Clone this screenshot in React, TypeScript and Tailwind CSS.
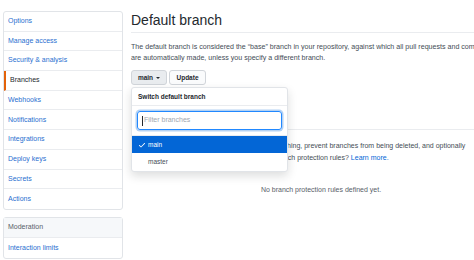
import React from 'react';

// Settings sidebar entries (repo settings page)
const navItems = [
  'Options',
  'Manage access',
  'Security & analysis',
  'Branches',
  'Webhooks',
  'Notifications',
  'Integrations',
  'Deploy keys',
  'Secrets',
  'Actions',
];

const Sidebar: React.FC = () => {
  return (
    <div className="w-[120px] shrink-0 ml-[3px] mt-[11px]">
      <div className="border border-[#e1e4e8] rounded-[3px] bg-white">
        {navItems.map((item, i) => {
          const active = item === 'Branches';
          return (
            <div
              key={item}
              className={
                'h-[19.7px] flex items-center pl-[4px] text-[7px] ' +
                (i < navItems.length - 1 ? 'border-b border-[#eaecef] ' : '') +
                (active
                  ? 'text-[#24292e] border-l-2 border-l-[#e36209] pl-[3px]'
                  : 'text-[#2a6fd0]')
              }
            >
              {item}
            </div>
          );
        })}
      </div>

      <div className="mt-[7px] border border-[#e1e4e8] rounded-[3px] bg-white">
        <div className="h-[20px] flex items-center pl-[4px] text-[7px] text-[#586069] bg-[#f6f8fa] border-b border-[#eaecef]">
          Moderation
        </div>
        <div className="h-[20px] flex items-center pl-[4px] text-[7px] text-[#2a6fd0]">
          Interaction limits
        </div>
      </div>
    </div>
  );
};

const CheckIcon: React.FC = () => (
  <svg width="8" height="8" viewBox="0 0 16 16" fill="white">
    <path d="M13.78 4.22a.75.75 0 010 1.06l-7.25 7.25a.75.75 0 01-1.06 0L2.22 9.28a.75.75 0 011.06-1.06L6 10.94l6.72-6.72a.75.75 0 011.06 0z" />
  </svg>
);

const BranchDropdown: React.FC = () => {
  return (
    <div className="absolute left-0 top-[17px] w-[157px] bg-white border border-[#e1e4e8] rounded-[3px] shadow-[0_4px_10px_rgba(27,31,35,0.15)] z-10">
      <div className="h-[18px] flex items-center pl-[6px] text-[6.5px] font-semibold text-[#24292e] border-b border-[#eaecef]">
        Switch default branch
      </div>
      <div className="px-[5px] pt-[5px] pb-[5px] border-b border-[#eaecef]">
        <div className="h-[19px] rounded-[3px] border border-[#2188ff] shadow-[0_0_0_1.5px_rgba(3,102,214,0.3)] flex items-center pl-[4px]">
          <span className="w-px h-[10px] bg-[#24292e] mr-[1px]" />
          <span className="text-[7px] text-[#a0a7b0]">Filter branches</span>
        </div>
      </div>
      <div className="h-[17px] bg-[#0366d6] flex items-center pl-[6px] text-[6.5px] text-white">
        <CheckIcon />
        <span className="ml-[2px]">main</span>
      </div>
      <div className="h-[18px] flex items-center pl-[16px] text-[6.5px] text-[#444d56]">master</div>
    </div>
  );
};

const App: React.FC = () => {
  return (
    <div
      className="w-[474px] h-[260px] overflow-hidden bg-white flex"
      style={{ fontFamily: '"Liberation Sans", Arial, sans-serif' }}
    >
      <Sidebar />

      <div className="ml-[8px] w-[380px] shrink-0 relative">
        {/* Default branch */}
        <div className="mt-[10px] h-[23px] border-b border-[#eaecef] text-[14px] leading-[20px] text-[#24292e]">
          Default branch
        </div>
        <p className="mt-[9px] text-[7.1px] leading-[11px] text-[#444d56] whitespace-nowrap">
          The default branch is considered the &ldquo;base&rdquo; branch in your repository, against which all pull requests and commits
          <br />
          are automatically made, unless you specify a different branch.
        </p>

        <div className="relative mt-[6px]">
          <div className="flex gap-[2px]">
            <div className="h-[15px] w-[36px] flex items-center justify-center gap-[3px] rounded-[3px] border border-[#d1d5da] bg-[#e9ecef] text-[6.5px] font-semibold text-[#24292e]">
              main
              <span className="w-0 h-0 border-l-[2px] border-r-[2px] border-t-[2.5px] border-l-transparent border-r-transparent border-t-[#24292e]" />
            </div>
            <div className="h-[15px] w-[37px] flex items-center justify-center rounded-[3px] border border-[#d1d5da] bg-[#fafbfc] text-[6.5px] font-semibold text-[#24292e]">
              Update
            </div>
          </div>
          <BranchDropdown />
        </div>

        {/* Branch protection rules (partly under the dropdown) */}
        <div className="mt-[18px] h-[27px] border-b border-[#eaecef] text-[11px] leading-[20px] text-[#24292e] flex items-end pb-[3px]">
          Branch protection rules
        </div>
        <p className="mt-[10px] text-[7px] leading-[12px] text-[#444d56] whitespace-nowrap">
          Define branch protection rules to disable force pushing, prevent branches from being deleted, and optionally
          <br />
          require status checks before merging. New to branch protection rules?{' '}
          <span className="text-[#0366d6]">Learn more.</span>
        </p>

        <div className="mt-[20px] text-center text-[7px] leading-[11px] text-[#586069]">
          No branch protection rules defined yet.
        </div>
      </div>
    </div>
  );
};

export default App;
